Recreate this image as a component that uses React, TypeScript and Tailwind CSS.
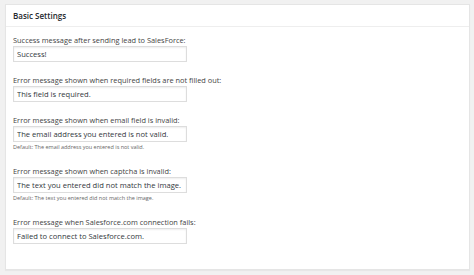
import React from 'react';

const fields = [
  { label: 'Success message after sending lead to SalesForce:', value: 'Success!' },
  { label: 'Error message shown when required fields are not filled out:', value: 'This field is required.' },
  {
    label: 'Error message shown when email field is invalid:',
    value: 'The email address you entered is not valid.',
    hint: 'Default: The email address you entered is not valid.',
  },
  {
    label: 'Error message shown when captcha is invalid:',
    value: 'The text you entered did not match the image.',
    hint: 'Default: The text you entered did not match the image.',
  },
  { label: 'Error message when Salesforce.com connection fails:', value: 'Failed to connect to Salesforce.com.' },
];

export default function App() {
  return (
    <div className="w-[474px] h-[275px] bg-[#f1f1f1] pt-[4px] pl-[5px] pr-[4px] font-['Open_Sans',sans-serif] text-[#444]">
      <div className="bg-white border border-[#e5e5e5] shadow-[0_1px_1px_rgba(0,0,0,0.04)] h-[266px]">
        <div className="h-[22px] border-b border-[#eee] flex items-center px-[7px]">
          <h3 className="text-[8px] font-semibold text-[#23282d]">Basic Settings</h3>
        </div>
        <div className="px-[7px] pt-[8px] flex flex-col">
          {fields.map((f) => (
            <div key={f.label} className="flex flex-col mb-[13px]">
              <label className="text-[7.4px] leading-[10px] mb-[1px]">{f.label}</label>
              <input
                type="text"
                readOnly
                value={f.value}
                className="w-[174px] h-[16px] border border-[#ddd] bg-white px-[3px] text-[7.6px] text-[#32373c] shadow-[inset_0_1px_2px_rgba(0,0,0,0.07)] outline-none"
              />
              {f.hint && <p className="text-[5.5px] leading-[11px] text-[#666]">{f.hint}</p>}
            </div>
          ))}
        </div>
      </div>
    </div>
  );
}
